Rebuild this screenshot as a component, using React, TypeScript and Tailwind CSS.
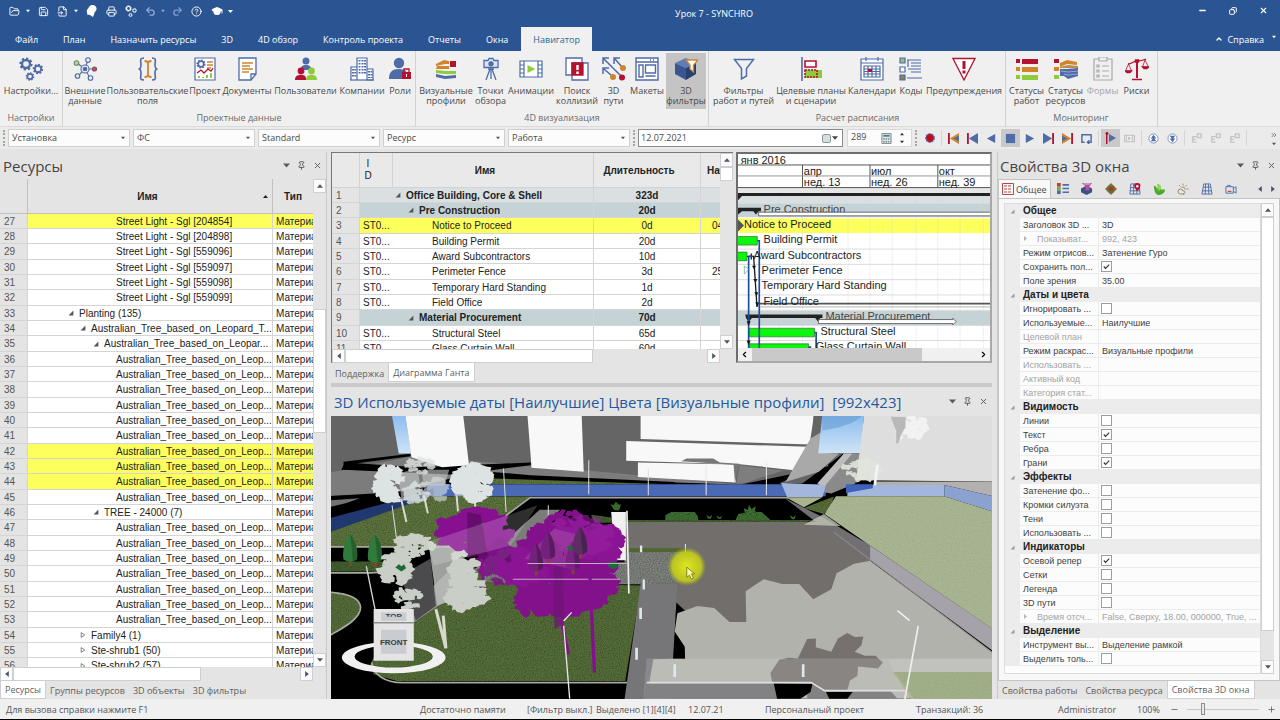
import { ReactNode } from 'react'
import { ChevronUp, CircleHelp, FolderOpen, GraduationCap, MapPin, Minus, Pin, Plus, Printer, Redo2, Save, Undo2, X, Copy, CloudSun, ChevronLeft, ChevronRight, FileInput, ChevronsRight } from 'lucide-react'

const BLUE = '#4f6ba8'
const RED = '#b5122f'
const LIME = '#8fcc3c'
const ORANGE = '#d0852c'

/* ---------- small glyphs ---------- */

const Tri = ({ dir = 'down', className = 'w-[6px] h-[6px] text-gray-600' }: { dir?: 'down' | 'up' | 'left' | 'right'; className?: string }) => {
    const d = { down: 'M0 2h10L5 8z', up: 'M0 8h10L5 2z', left: 'M8 0v10L2 5z', right: 'M2 0v10l6-5z' }[dir]
    return (
        <svg viewBox="0 0 10 10" className={className} fill="currentColor" aria-hidden="true">
            <path d={d} />
        </svg>
    )
}

const Gear = ({ x, y, r, color = BLUE }: { x: number; y: number; r: number; color?: string }) => (
    <g fill="none" stroke={color}>
        <circle cx={x} cy={y} r={r} strokeWidth={r * 0.6} />
        <circle cx={x} cy={y} r={r * 1.4} strokeWidth={r * 0.5} pathLength={16} strokeDasharray="1.1 .9" />
    </g>
)

/* ---------- ribbon icons ---------- */

const icons: Record<string, ReactNode> = {
    settings: (
        <>
            <Gear x={7} y={7} r={4} />
            <Gear x={19} y={12} r={3.200} />
            <Gear x={11} y={19.500} r={2.600} />
        </>
    ),
    external: (
        <g fill="none" stroke={BLUE} strokeWidth="1.1">
            <path d="M12 12 4 6M12 12l3-9M12 12h9M12 12l5 9M12 12l-7 7" />
            <circle cx="12" cy="12" r="4" fill="#f0f0f0" />
            <circle cx="12" cy="12" r="1.8" fill={BLUE} />
            <circle cx="3.5" cy="6" r="2.3" fill="#b9d3a0" stroke="#6d8a6a" />
            <circle cx="15" cy="3" r="2.3" fill="#f0f0f0" />
            <circle cx="21.5" cy="12" r="2" fill="#c0506a" stroke="#7e4a62" />
            <circle cx="17.5" cy="21" r="2.3" fill="#f0f0f0" />
            <circle cx="4.5" cy="19" r="2.3" fill="#dce8cc" />
        </g>
    ),
    fields: (
        <g fill="none" strokeWidth="1.6">
            <path stroke={BLUE} d="M8 1C3 1 5 4 5 8c0 2.500-1 4-2.500 4C4 12 5 13.500 5 16c0 4-2 7 3 7M16 1c5 0 3 3 3 7 0 2.500 1 4 2.500 4-1.500 0-2.500 1.500-2.500 4 0 4 2 7-3 7" />
            <path stroke={ORANGE} strokeWidth="1.8" d="M8.500 4c2 0 3.500.5 3.500 2.500v11c0 2-1.500 2.500-3.500 2.500M15.500 4c-2 0-3.500.5-3.500 2.500v11c0 2 1.500 2.500 3.500 2.500" />
        </g>
    ),
    project: (
        <g fill="none">
            <path stroke={BLUE} fill="#fff" strokeWidth="1.2" d="M2 1h20v22H2z" />
            <Gear x={8} y={7} r={2.8} />
            <path stroke={ORANGE} strokeWidth="1.4" d="M14 5h6M14 8h6M14 11h4" />
            <path stroke={RED} strokeWidth="1.3" d="m4 16 4-3 3 3 4-4 3 2 2-3" />
            <path stroke={LIME} strokeWidth="2" d="M6 21v-2M10 21v-1M14 21v-3M18 21v-5" />
        </g>
    ),
    docs: (
        <g fill="none" stroke={BLUE} strokeWidth="1.3">
            <path fill="#fff" d="M4 1h17v16l-5 6H4zM16 23v-6h5" />
            <path stroke={ORANGE} d="M7 6h11M7 9h8M7 12h11M7 15h7" />
        </g>
    ),
    users: (
        <>
            <circle cx="12" cy="4" r="3.5" fill={BLUE} />
            <path fill={BLUE} d="M6.500 13c0-3.500 2-5 5.500-5s5.500 1.500 5.500 5z" />
            <circle cx="7" cy="14" r="3.4" fill={RED} />
            <path fill={RED} d="M1 23c0-4 2-5 6-5s5 1 5 5z" />
            <circle cx="17.5" cy="14" r="3.4" fill={LIME} />
            <path fill={LIME} d="M12 23c0-4 2-5 5.500-5s5.500 1 5.500 5z" />
        </>
    ),
    companies: (
        <g fill="none" stroke={BLUE} strokeWidth="1.2">
            <path fill="#fff" d="M1 23V10h6v13M7 23V1h10v22M17 23V12h6v11z" />
            <path strokeWidth="2" strokeDasharray="1.5 1.5" d="M9.500 3v15M12.500 3v15M15 3v15M3 12v9M5.300 12v9M19 14v7M21.500 14v7" />
            <path d="M0 23h24" />
        </g>
    ),
    roles: (
        <>
            <circle cx="11" cy="6" r="5.2" fill={BLUE} />
            <path fill={BLUE} d="M1 22c0-7 3-10 10-10s9 3 9 10z" />
            <path fill={RED} d="M14 15h9v7h-9z" />
            <path fill="none" stroke={RED} strokeWidth="1.3" d="M16 15v-3h5v3" />
            <path stroke="#fff" d="M18.500 17v3" />
        </>
    ),
    profiles: (
        <>
            <path fill={ORANGE} d="m2 7 8-4 5 1v3l-4 0-9 2z" />
            <path fill={RED} d="M16 4h6v6h-6z" />
            <path fill={ORANGE} d="M3 9h12v3H2z" />
            <path fill={LIME} d="m2 13 9 1h11v3H11l-9-1z" />
            <path fill={BLUE} d="m2 17 9 2 11-1v3l-11 1-9-2z" />
        </>
    ),
    viewpoint: (
        <g fill="none" stroke={BLUE} strokeWidth="1.3">
            <path fill="#dfe5f2" d="M5 3.500h4l1-2h4l1 2h4v7H5z" />
            <circle cx="12" cy="6.8" r="2" fill={BLUE} />
            <path d="M12 10.500V22M11 12 7 23M13 12l4 11M9 12h6" />
        </g>
    ),
    animation: (
        <g fill="none" stroke={BLUE} strokeWidth="1.2">
            <path fill="#fff" d="M1 4h22v16H1z" />
            <path d="M5 4v16M19 4v16M1 8h4M1 12h4M1 16h4M19 8h4M19 12h4M19 16h4" />
            <path fill={LIME} stroke="none" d="M8.500 8v8l8-4z" />
        </g>
    ),
    clash: (
        <g fill="none" stroke={BLUE} strokeWidth="1.3">
            <path fill="#fff" d="M1 1h16v17H1z" />
            <path fill="#fff" d="M7 6h16v17H7z" />
            <path fill={RED} stroke={RED} d="M7 6h11v12H7z" />
            <path stroke="#fff" strokeWidth="2.4" d="M12.500 8v5M12.500 14.500V17" />
        </g>
    ),
    paths: (
        <>
            <path fill="none" stroke={BLUE} strokeWidth="1.5" d="m2 2 9 9M1 7V1h6M13 2l7 8M12 7V1h6M2 12l8 7M1 17v-6h6M10 10l9 9" />
            <circle cx="21" cy="11" r="3" fill={ORANGE} />
            <circle cx="11" cy="20" r="3" fill={ORANGE} />
            <circle cx="20" cy="20.5" r="3" fill={RED} />
        </>
    ),
    layouts: (
        <g fill="none" stroke={BLUE} strokeWidth="1.4">
            <path fill="#fff" d="M1 1h22v22H1z" />
            <path d="M1 5h22M4 8h4v12H4zM10.500 8h10v8h-10zM10.500 19h10M15 3h1M18 3h1" />
        </g>
    ),
    filters3d: (
        <>
            <path fill="#5f7cba" d="m12 1 10 5-10 5L1 6z" />
            <path fill="#3a5590" d="m1 6 11 5v12L1 17z" />
            <path fill="#27406f" d="m22 6-10 5v12l10-6z" />
            <path fill="#fff" stroke={ORANGE} strokeWidth="1.3" d="M12 3h12l-4.500 5v7L16 12V8z" />
        </>
    ),
    funnel: <path fill="none" stroke={BLUE} strokeWidth="1.5" d="M2.500 2.500h19l-7 9V19l-5 3V11.500z" />,
    baselines: (
        <g fill="none" strokeWidth="1.6">
            <path stroke={BLUE} d="M3 0v24" />
            <path stroke={RED} fill="#fff" d="M6 4h11v6H6z" />
            <path fill={LIME} d="M6 13h17v8H6z" />
            <path stroke={RED} strokeDasharray="2 1" d="M6 13h12v7H6z" />
        </g>
    ),
    calendar: (
        <g fill="none" stroke={BLUE} strokeWidth="1.2">
            <path fill="#fff" d="M1 2h22v21H1zM1 6h22" />
            <path d="M6 0v4M18 0v4M4 9h16v11H4zM4 12h16M4 14.500h16M4 17h16M8 9v11M12 9v11M16 9v11" />
            <path fill={RED} stroke="none" d="M8 12h4v3H8z" />
        </g>
    ),
    codes: (
        <g fill="none" stroke={BLUE} strokeWidth="1.2">
            <path fill="#9bbf6c" d="M1 1h5v5H1z" />
            <path fill="#fff" d="M1 10h5v5H1z" />
            <path fill="#8f7f52" d="M1 18h5v5H1z" />
            <path d="M8 3h14M12 6h10M12 9h10M9 3v7M9 12h13M12 15h10M8 21h15" />
        </g>
    ),
    warning: (
        <>
            <path fill="#fff" stroke={RED} strokeWidth="1.3" d="M1 1.500h22L12 23z" />
            <path stroke={RED} strokeWidth="3" d="M12 4v8M12 13.500v3" />
        </>
    ),
    taskStatus: (
        <>
            <path fill={RED} d="M1 2h4v4H1zM7 2h16v5H7z" />
            <path fill={ORANGE} d="M1 10h4v4H1zM7 10h16v5H7z" />
            <path fill={LIME} d="M1 18h4v4H1zM7 18h16v5H7z" />
        </>
    ),
    resStatus: (
        <>
            <path fill={RED} d="M0 2h5v4H0z" />
            <path fill={ORANGE} d="M0 10h5v4H0zM6 6l7-3 10 2v3l-10-1-7 3z" />
            <path fill={LIME} d="M0 18h5v4H0z" />
            <path fill="#b98c4a" d="m6 10 8-2 10 1v2H6z" />
            <path fill={BLUE} d="m6 12 7 0 11-1v8l-10 3-4-3H6z" />
            <path fill="none" stroke="#a9b8da" strokeWidth=".8" d="m7 14 7 1 10-1M10 17l4 1 10-1" />
        </>
    ),
    forms: (
        <g fill="none" stroke="#a9a9a9" strokeWidth="1.2">
            <path d="M3 2h18v21H3z" />
            <path fill="#f0f0f0" d="M8 0h8v4H8z" />
            <path d="M6 8h2v2H6zM6 13h2v2H6zM6 18h2v2H6zM11 9h7M11 14h7M11 19h7" />
        </g>
    ),
    risks: (
        <g fill="none" stroke={RED} strokeWidth="1.3">
            <path strokeWidth="2" d="M12 4v17" />
            <path d="M3 7c4 0 5-3 9-3s5 0 9-2M7 22.500h10" />
            <path strokeWidth=".8" d="m3.500 7-3 7h6zM20 3l-2.500 7h6z" />
            <path fill={RED} d="M.5 14h6L5 15.500H2zM17.500 10h6L22 11.500h-3zM10.500 3h3v2h-3z" />
        </g>
    )
}

type RibbonItem = { icon: string; label: string[]; w: string; active?: boolean; disabled?: boolean }

const ribbon: { title: string; pad: string; items: RibbonItem[] }[] = [
    { title: 'Настройки', pad: 'px-[3px]', items: [{ icon: 'settings', label: ['Настройки...'], w: 'w-[56px]' }] },
    {
        title: 'Проектные данные',
        pad: 'pl-[1px] pr-[1px]',
        items: [
            { icon: 'external', label: ['Внешние', 'данные'], w: 'w-[42px]' },
            { icon: 'fields', label: ['Пользовательские', 'поля'], w: 'w-[83px]' },
            { icon: 'project', label: ['Проект'], w: 'w-[32px]' },
            { icon: 'docs', label: ['Документы'], w: 'w-[52px]' },
            { icon: 'users', label: ['Пользователи'], w: 'w-[65px]' },
            { icon: 'companies', label: ['Компании'], w: 'w-[48px]' },
            { icon: 'roles', label: ['Роли'], w: 'w-[28px]' }
        ]
    },
    {
        title: '4D визуализация',
        pad: 'pl-[2px] pr-[2px]',
        items: [
            { icon: 'profiles', label: ['Визуальные', 'профили'], w: 'w-[56px]' },
            { icon: 'viewpoint', label: ['Точки', 'обзора'], w: 'w-[33px]' },
            { icon: 'animation', label: ['Анимации'], w: 'w-[48px]' },
            { icon: 'clash', label: ['Поиск', 'коллизий'], w: 'w-[44px]' },
            { icon: 'paths', label: ['3D', 'пути'], w: 'w-[29px]' },
            { icon: 'layouts', label: ['Макеты'], w: 'w-[38px]' },
            { icon: 'filters3d', label: ['3D', 'фильтры'], w: 'w-[40px]', active: true }
        ]
    },
    {
        title: 'Расчет расписания',
        pad: 'pl-[3px] pr-[2px]',
        items: [
            { icon: 'funnel', label: ['Фильтры', 'работ и путей'], w: 'w-[63px]' },
            { icon: 'baselines', label: ['Целевые планы', 'и сценарии'], w: 'w-[72px]' },
            { icon: 'calendar', label: ['Календари'], w: 'w-[50px]' },
            { icon: 'codes', label: ['Коды'], w: 'w-[28px]' },
            { icon: 'warning', label: ['Предупреждения'], w: 'w-[78px]' }
        ]
    },
    {
        title: 'Мониторинг',
        pad: 'pl-[2px] pr-[3px]',
        items: [
            { icon: 'taskStatus', label: ['Статусы', 'работ'], w: 'w-[37px]' },
            { icon: 'resStatus', label: ['Статусы', 'ресурсов'], w: 'w-[41px]' },
            { icon: 'forms', label: ['Формы'], w: 'w-[33px]', disabled: true },
            { icon: 'risks', label: ['Риски'], w: 'w-[35px]' }
        ]
    }
]

/* ---------- title bar and ribbon ---------- */

const quickIcon = 'w-[11px] h-[11px] text-white'

const TitleBar = () => (
    <div className="flex h-[27px] items-center">
        <div className="flex w-[238px] shrink-0 items-center pl-[9px] pb-[6px] gap-[5px] pt-[1px]">
            <button aria-label="Открыть" className="flex items-center gap-[6px]">
                <FolderOpen className={quickIcon} />
                <Tri className="w-1 h-1 text-white" />
            </button>
            <button aria-label="Сохранить" className="ml-[3px]">
                <Save className={quickIcon} />
            </button>
            <button aria-label="Импорт" className="ml-[3px] flex items-center gap-[6px]">
                <FileInput className={quickIcon} />
                <Tri className="w-1 h-1 text-white" />
            </button>
            <button aria-label="Знание" className="ml-[3px]">
                <svg viewBox="0 0 12 12" className="h-3 w-3" fill="#fff">
                    <path d="M6 0c3 0 5 2 4.500 4.500-.5 2-2 2-2 3.500L7 12 4 10 1 9.500C2 8 0 7 1 5s1-1 1.500-2S4 0 6 0z" />
                </svg>
            </button>
            <button aria-label="Печать" className="ml-[3px]">
                <Printer className={quickIcon} />
            </button>
            <button aria-label="Параметры" className="ml-[3px]">
                <svg viewBox="0 0 24 24" className="h-3 w-3">
                    <Gear x={7} y={7} r={4} color="#fff" />
                    <Gear x={19} y={11} r={3} color="#fff" />
                    <Gear x={11} y={20} r={2.5} color="#fff" />
                </svg>
            </button>
            <button aria-label="Отменить" className="ml-[3px] flex items-center gap-[5px]">
                <Undo2 className="w-[11px] h-[11px] text-[#8fa6cf]" strokeWidth={3} />
                <Tri className="w-1 h-1 text-[#8fa6cf]" />
            </button>
            <button aria-label="Вернуть" className="ml-[2px]">
                <Redo2 className="w-[11px] h-[11px] text-[#7f98c6]" strokeWidth={3} />
            </button>
            <button aria-label="Помощь" className="ml-[3px]">
                <CircleHelp className={quickIcon} />
            </button>
            <button aria-label="Обучение" className="ml-[4px] flex items-center gap-[5px]">
                <GraduationCap className="w-[12px] h-[12px] fill-white text-white" strokeWidth={2} />
                <Tri className="w-[5px] h-[5px] text-white" />
            </button>
        </div>
        <h1 className="flex-1 text-center text-white">Урок 7 - SYNCHRO</h1>
        <div className="flex w-[90px] shrink-0 items-center gap-[22px] pl-2 pb-[6px] text-white">
            <button aria-label="Свернуть"><Minus className="w-[9px] h-[9px]" strokeWidth={4} /></button>
            <button aria-label="Восстановить"><Copy className="w-[8px] h-[8px] -scale-x-100" strokeWidth={3} /></button>
            <button aria-label="Закрыть"><X className="w-[9px] h-[9px]" strokeWidth={3} /></button>
        </div>
    </div>
)

const menu = ['Файл', 'План', 'Назначить ресурсы', '3D', '4D обзор', 'Контроль проекта', 'Отчеты', 'Окна', 'Навигатор']

const MenuBar = () => (
    <nav className="flex h-[24px] items-stretch gap-px pl-[3px] text-white">
        {menu.map(m => (
            <button key={m} className={m === 'Навигатор' ? 'bg-[#f0f0f0] px-3 text-[#1f6b8f]' : 'px-3'}>{m}</button>
        ))}
        <button className="ml-auto flex items-center gap-1 pr-1">
            <ChevronUp className="w-[8px] h-[8px]" strokeWidth={4} />
            Справка
            <Tri className="ml-1 mb-1 w-1 h-1 text-white" />
        </button>
    </nav>
)

const Ribbon = () => (
    <div className="flex h-[75px] shrink-0 bg-[#f0f0f0] text-[#4a4a4a]">
        {ribbon.map(g => (
            <section key={g.title} className={`flex shrink-0 flex-col border-r border-[#d2d2d2] pt-[2px] ${g.pad}`}>
                <div className="flex h-[56px]">
                    {g.items.map(it => (
                        <button
                            key={it.icon}
                            disabled={it.disabled}
                            className={`flex shrink-0 flex-col items-center overflow-visible whitespace-nowrap pt-1 leading-[10px] ${it.w} ${it.active ? 'bg-[#c4c4c4]' : ''} ${it.disabled ? 'text-[#a6a6a6]' : ''}`}
                        >
                            <svg viewBox="0 0 24 24" className="mb-[5px] h-6 w-6 shrink-0">{icons[it.icon]}</svg>
                            {it.label.map(l => <span key={l} className="flex w-0 justify-center">{l}</span>)}
                        </button>
                    ))}
                </div>
                <h2 className="mt-[2px] text-center text-[#6b6b6b]">{g.title}</h2>
            </section>
        ))}
    </div>
)

/* ---------- toolbar ---------- */

const Grip = () => <div className="mx-[3px] h-4 w-0 border-l-2 border-dotted border-[#a5a5a5]" />

const Divider = () => <div className="mx-[2px] h-4 w-px bg-[#d6d6d6]" />

const Combo = ({ label, value }: { label: string; value: string }) => (
    <label className="relative flex h-[18px] w-[122px] items-center border border-[#d0d0d0] bg-[#fcfcfc]">
        <span className="sr-only">{label}</span>
        <select className="h-full w-full appearance-none bg-transparent pl-[3px] leading-4 outline-none">
            <option>{value}</option>
        </select>
        <span className="pointer-events-none absolute right-1"><Tri className="h-1 w-1 text-gray-600" /></span>
    </label>
)

const tb = 'flex h-[18px] w-[19px] items-center justify-center'

const player: { name: string; on?: boolean; art: ReactNode }[] = [
    { name: 'В начало', art: <><path fill={RED} d="M0 0h2v12H0z" /><path fill={ORANGE} d="M12 0v12L2 6z" /><path fill={BLUE} d="M12 3v6L6 6z" /></> },
    { name: 'Предыдущий', art: <><path fill={RED} d="M0 0h2v12H0z" /><path fill={BLUE} d="M12 0v12L2 6z" /></> },
    { name: 'Назад', art: <path fill={BLUE} d="M10 1v10L1 6z" /> },
    { name: 'Стоп', on: true, art: <path fill={BLUE} d="M1 1h10v10H1z" /> },
    { name: 'Воспроизвести', art: <path fill={BLUE} d="M2 1v10l9-5z" /> },
    { name: 'Следующий', art: <><path fill={RED} d="M10 0h2v12h-2z" /><path fill={BLUE} d="M0 0v12l10-6z" /></> },
    { name: 'В конец', art: <><path fill={RED} d="M10 0h2v12h-2z" /><path fill={ORANGE} d="M0 0v12l10-6z" /><path fill={BLUE} d="M0 3v6l6-3z" /></> },
    { name: 'Цикл', art: <path fill="none" stroke={BLUE} strokeWidth="1.6" d="M4 10H1V2h10v8H7.500M9 8l-2 2 2 2" /> }
]

const Toolbar = () => (
    <div className="flex h-[23px] shrink-0 items-center border-t border-[#dadada] bg-[#ebebeb] pl-[3px] text-[#4a4a4a]">
        <div className="mr-[3px] h-4 w-0 border-l-2 border-dotted border-[#a5a5a5]" />
        <div className="flex gap-[3px]">
            <Combo label="Тип" value="Установка" />
            <Combo label="Роль" value="ФС" />
            <Combo label="Вид" value="Standard" />
            <Combo label="Объект" value="Ресурс" />
            <Combo label="Цель" value="Работа" />
        </div>
        <Grip />
        <label className="flex h-[18px] w-[205px] items-center border border-[#8a8a8a] bg-white pr-1">
            <span className="sr-only">Дата</span>
            <input className="min-w-0 flex-1 pl-[2px] leading-4 outline-none" defaultValue="12.07.2021" />
            <span className="mr-px h-[9px] w-[9px] rounded-[2px] border border-[#8a9a9a] bg-[#d8dede]" />
            <Tri className="h-[6px] w-[6px] text-[#444]" />
        </label>
        <label className="ml-1 flex h-[18px] w-[65px] items-center border border-[#d8d8d8] bg-[#fcfcfc]">
            <span className="sr-only">День</span>
            <input className="min-w-0 flex-1 pl-[3px] pb-[2px] leading-4 outline-none" defaultValue="289" />
            <svg viewBox="0 0 12 12" className="h-[11px] w-[11px]">
                <path fill="#d9e6e0" stroke="#7b8790" d="M1 .5h10v11H1z" />
                <path fill="#4d7f86" d="M2.500 2h7v2h-7z" />
                <path stroke="#7b8790" strokeWidth="1.5" strokeDasharray="1.5 1" d="M2.500 6.500h8M2.500 9.500h8" />
            </svg>
            <span className="flex w-[19px] flex-col items-center gap-[4px]">
                <Tri dir="up" className="h-1 w-1 text-[#333]" />
                <Tri className="h-1 w-1 text-[#333]" />
            </span>
        </label>
        <Grip />
        <button aria-label="Запись" className={tb}>
            <svg viewBox="0 0 12 12" className="h-[10px] w-[10px]"><circle cx="6" cy="6" r="5" fill="#c00a1e" stroke={BLUE} strokeWidth="1.6" strokeDasharray="2.5 1" /></svg>
        </button>
        <Divider />
        {player.map(p => (
            <button key={p.name} aria-label={p.name} className={p.on ? `${tb} bg-[#c9c9c9]` : tb}>
                <svg viewBox="0 0 12 12" className="h-[11px] w-[11px]">{p.art}</svg>
            </button>
        ))}
        <Divider />
        <button aria-label="Фокус" className={`${tb} bg-[#c9c9c9]`}>
            <svg viewBox="0 0 12 12" className="h-3 w-3"><path fill={RED} d="M1 0h1.500v12H1z" /><path fill={BLUE} d="M4 2v8l7-4z" /><circle cx="2" cy="1.5" r="1.5" fill={RED} /></svg>
        </button>
        <button aria-label="Клип" className={tb}>
            <svg viewBox="0 0 12 12" className="h-[11px] w-[11px]"><path fill="none" stroke="#bdbdbd" d="M.5 2.500h11v7H.5zM2.500 2.500v7M9.500 2.500v7" /><path fill="#bdbdbd" d="M4.500 4v4l3-2z" /></svg>
        </button>
        <Divider />
        {['вверх', 'вниз'].map((n, i) => (
            <button key={n} aria-label={n} className={tb}>
                <svg viewBox="0 0 12 12" className={i ? 'h-[11px] w-[11px] rotate-180' : 'h-[11px] w-[11px]'}>
                    <circle cx="6" cy="6" r="5" fill="#fff" stroke="#7d91bd" />
                    <path fill={BLUE} d="M6 2 3 6h6zM6 5 3 9h6z" />
                </svg>
            </button>
        ))}
        <Divider />
        {['Связь 1', 'Связь 2', 'Связь 3'].map(n => (
            <button key={n} aria-label={n} disabled className={tb}>
                <svg viewBox="0 0 12 12" className="h-[11px] w-[11px]" fill="none" stroke="#c4c4c4" strokeWidth="1.5"><path d="M6 4H2v6h4M2 7h3M7 1h4v4H7z" /></svg>
            </button>
        ))}
        <Divider />
        <button aria-label="Ещё" className="ml-auto flex flex-col items-center gap-[3px] pr-[2px]">
            <ChevronsRight className="h-2 w-2" />
            <Tri className="h-1 w-1 text-gray-600" />
        </button>
    </div>
)

/* ---------- shared panel parts ---------- */

const PanelButtons = () => (
    <div className="flex items-center gap-[7px] text-[#5a5a5a]">
        <button aria-label="Меню панели"><Tri className="h-[7px] w-[7px]" /></button>
        <button aria-label="Закрепить"><Pin className="h-[9px] w-[9px]" strokeWidth={2.5} /></button>
        <button aria-label="Закрыть панель"><X className="h-[9px] w-[9px]" strokeWidth={2.5} /></button>
    </div>
)

const sbBtn = 'flex h-[14px] w-[13px] shrink-0 items-center justify-center border border-[#cfcfcf] bg-[#fbfbfb]'

const VScroll = ({ before, thumb, after }: { before: string; thumb: string; after: string }) => (
    <div className="flex w-[13px] shrink-0 flex-col bg-[#e4e4e4]">
        <button aria-label="Вверх" className={sbBtn}><Tri dir="up" /></button>
        <div className={before} />
        <div className={`border border-[#cfcfcf] bg-white ${thumb}`} />
        <div className={after} />
        <button aria-label="Вниз" className={sbBtn}><Tri /></button>
    </div>
)

const HScroll = ({ thumb, end }: { thumb: string; end: string }) => (
    <div className={`flex h-[14px] shrink-0 bg-[#e4e4e4] ${end}`}>
        <button aria-label="Влево" className={sbBtn}><Tri dir="left" /></button>
        <div className={`border border-[#cfcfcf] bg-white ${thumb}`} />
        <div className="flex-1" />
        <button aria-label="Вправо" className={sbBtn}><Tri dir="right" /></button>
    </div>
)

const Tabs = ({ items, active }: { items: string[]; active: string }) => (
    <div className="flex h-[18px] shrink-0 items-stretch text-[#5f5f5f]">
        {items.map(t => (
            <button key={t} className={t === active ? 'border border-t-0 border-[#cfcfcf] bg-white px-1' : 'px-1'}>{t}</button>
        ))}
    </div>
)

const Expander = ({ open }: { open: boolean }) => (
    <svg viewBox="0 0 10 10" className="mr-[5px] h-[6px] w-[6px] shrink-0">
        {open ? <path fill="#555" d="M9 1v8H1z" /> : <path fill="none" stroke="#777" strokeWidth="1.5" d="M2 1v8l6-4z" />}
    </svg>
)

const rowHeight = (i: number) => (i % 3 === 2 ? 'h-4' : 'h-[15px]')

/* ---------- resources ---------- */

type ResourceRow = { n: number; name: string; indent: string; open?: boolean; hit?: boolean }

const LEAF = 'pl-[88px]'
const tree = (n: number, hit = false): ResourceRow => ({ n, name: 'Australian_Tree_based_on_Leop...', indent: LEAF, hit })

const resources: ResourceRow[] = [
    { n: 27, name: 'Street Light - Sgl [204854]', indent: LEAF, hit: true },
    { n: 28, name: 'Street Light - Sgl [204898]', indent: LEAF },
    { n: 29, name: 'Street Light - Sgl [559096]', indent: LEAF },
    { n: 30, name: 'Street Light - Sgl [559097]', indent: LEAF },
    { n: 31, name: 'Street Light - Sgl [559098]', indent: LEAF },
    { n: 32, name: 'Street Light - Sgl [559099]', indent: LEAF },
    { n: 33, name: 'Planting (135)', indent: 'pl-[40px]', open: true },
    { n: 34, name: 'Australian_Tree_based_on_Leopard_T...', indent: 'pl-[52px]', open: true },
    { n: 35, name: 'Australian_Tree_based_on_Leopar...', indent: 'pl-[65px]', open: true },
    ...[36, 37, 38, 39, 40, 41].map(n => tree(n)),
    ...[42, 43, 44].map(n => tree(n, true)),
    tree(45),
    { n: 46, name: 'TREE - 24000 (7)', indent: 'pl-[65px]', open: true },
    ...[47, 48, 49, 50, 51, 52, 53].map(n => tree(n)),
    { n: 54, name: 'Family4 (1)', indent: 'pl-[52px]', open: false },
    { n: 55, name: 'Ste-shrub1 (50)', indent: 'pl-[52px]', open: false },
    { n: 56, name: 'Ste-shrub2 (57)', indent: 'pl-[52px]', open: false }
]

const ResourcesPanel = () => (
    <aside className="flex w-[327px] shrink-0 flex-col border-r border-[#c8c8c8]">
        <header className="flex h-[27px] shrink-0 items-center justify-between pl-[3px] pr-1">
            <h2 className="text-[15px] leading-5 text-[#444]">Ресурсы</h2>
            <PanelButtons />
        </header>
        <div className="flex min-h-0 flex-1">
            <div className="min-w-0 flex-1 overflow-hidden bg-white">
                <table className="w-full table-fixed border-separate border-spacing-0 font-['Liberation_Sans',sans-serif] text-[10px] leading-[13px] text-[#222]">
                    <thead>
                        <tr className="bg-[#e4e4e4]">
                            <th className="h-[35px] w-[28px] border-b border-r border-[#c0c0c0]" />
                            <th className="border-b border-r border-[#c0c0c0]">
                                <span className="flex items-center"><span className="flex-1 pl-1">Имя</span><Tri dir="up" className="mr-1 h-[5px] w-[5px]" /></span>
                            </th>
                            <th className="w-[40px] border-b border-[#c0c0c0]">Тип</th>
                        </tr>
                    </thead>
                    <tbody>
                        {resources.map((r, i) => (
                            <tr key={r.n} className={r.hit ? 'bg-[#fdff5c]' : 'bg-white'}>
                                <td className={`border-b border-r border-[#d5d5d5] bg-[#e4e4e4] pl-1 text-[#555] ${rowHeight(i)}`}>{r.n}</td>
                                <td className="overflow-hidden border-b border-r border-[#d5d5d5]">
                                    <span className={`flex items-center whitespace-nowrap ${r.indent}`}>
                                        {r.open !== undefined && <Expander open={r.open} />}
                                        {r.name}
                                    </span>
                                </td>
                                <td className="overflow-hidden whitespace-nowrap border-b border-[#d5d5d5] pl-[3px]">Материал</td>
                            </tr>
                        ))}
                    </tbody>
                </table>
            </div>
            <VScroll before="h-[116px]" thumb="h-[124px]" after="flex-1" />
        </div>
        <HScroll thumb="w-[188px]" end="pr-[13px]" />
        <Tabs items={['Ресурсы', 'Группы ресурсов', '3D объекты', '3D фильтры']} active="Ресурсы" />
    </aside>
)

/* ---------- gantt ---------- */

const tasks = [
    { n: 1, id: '', name: 'Office Building, Core & Shell', dur: '323d', start: '', level: 0 },
    { n: 2, id: '', name: 'Pre Construction', dur: '20d', start: '', level: 1 },
    { n: 3, id: 'ST0...', name: 'Notice to Proceed', dur: '0d', start: '04.01', level: 2 },
    { n: 4, id: 'ST0...', name: 'Building Permit', dur: '20d', start: '', level: 2 },
    { n: 5, id: 'ST0...', name: 'Award Subcontractors', dur: '10d', start: '', level: 2 },
    { n: 6, id: 'ST0...', name: 'Perimeter Fence', dur: '3d', start: '25.01', level: 2 },
    { n: 7, id: 'ST0...', name: 'Temporary Hard Standing', dur: '1d', start: '', level: 2 },
    { n: 8, id: 'ST0...', name: 'Field Office', dur: '2d', start: '', level: 2 },
    { n: 9, id: '', name: 'Material Procurement', dur: '70d', start: '', level: 1 },
    { n: 10, id: 'ST0...', name: 'Structural Steel', dur: '65d', start: '', level: 2 },
    { n: 11, id: 'ST0...', name: 'Glass Curtain Wall', dur: '60d', start: '', level: 2 }
]

const rowColor = (t: (typeof tasks)[number]) => {
    if (t.n === 3) return 'bg-[#fdff5c]'
    return ['bg-[#dadfe2] font-bold', 'bg-[#c6d3d6] font-bold', 'bg-white'][t.level]
}

const TaskTable = () => (
    <div className="flex min-w-0 flex-1 flex-col border-l border-t border-[#777] bg-[#e4e4e4]">
        <div className="flex min-h-0 flex-1">
            <div className="min-w-0 flex-1 overflow-hidden bg-white">
                <table className="w-full table-fixed border-separate border-spacing-0 font-['Liberation_Sans',sans-serif] text-[10px] leading-[13px] text-[#222]">
                    <thead>
                        <tr className="bg-[#e9e9e9]">
                            <th className="h-[35px] w-[28px] border-b border-r border-[#d2d2d2]" />
                            <th className="w-[33px] border-b border-r border-[#d2d2d2] font-normal leading-3"><span className="flex flex-col pr-4"><span>I</span><span>D</span></span></th>
                            <th className="border-b border-r border-[#d2d2d2] pr-4">Имя</th>
                            <th className="w-[107px] border-b border-r border-[#d2d2d2] pr-4">Длительность</th>
                            <th className="w-[19px] overflow-hidden whitespace-nowrap border-b border-[#d2d2d2] pl-[6px] text-left">Начало</th>
                        </tr>
                    </thead>
                    <tbody>
                        {tasks.map((t, i) => (
                            <tr key={t.n} className={rowColor(t)}>
                                <td className={`border-b border-r border-[#d5d5d5] bg-[#e4e4e4] pl-1 font-normal text-[#555] ${rowHeight(i)}`}>{t.n}</td>
                                <td className="overflow-hidden whitespace-nowrap border-b border-[#d5d5d5] pl-[3px]">{t.id}</td>
                                <td className="overflow-hidden border-b border-r border-[#d5d5d5]">
                                    <span className={`flex items-center whitespace-nowrap ${['pl-[2px]', 'pl-[15px]', 'pl-[39px]'][t.level]}`}>
                                        {t.level < 2 && <Expander open />}
                                        {t.name}
                                    </span>
                                </td>
                                <td className="border-b border-r border-[#d5d5d5] text-center">{t.dur}</td>
                                <td className="overflow-hidden whitespace-nowrap border-b border-[#d5d5d5] pl-[11px]">{t.start}</td>
                            </tr>
                        ))}
                    </tbody>
                </table>
            </div>
            <VScroll before="h-0" thumb="h-[14px]" after="flex-1" />
        </div>
        <HScroll thumb="w-[248px]" end="pr-[13px]" />
    </div>
)

const GanttChart = () => (
    <div className="ml-[3px] flex w-[256px] shrink-0 flex-col border-2 border-[#a8a8a8] border-l-[#6e6e6e] border-t-[#6e6e6e] bg-white">
        <svg viewBox="24 9 758 585" preserveAspectRatio="xMinYMin slice" className="min-h-0 w-full flex-1 font-['Liberation_Sans',sans-serif] text-[33px]" fill="#1c1c1c">
            <path fill="#fff" d="M24 9h758v600H24z" />
            <path fill="#e6e6e6" d="M24 110h758v18H24z" />
            <path fill="#dadfe2" d="M24 128h758v29H24z" />
            <path fill="#c6d3d6" d="M24 157h758v42H24zM24 480h758v45H24z" />
            <path fill="#fdff5c" d="M24 203h758v44H24z" />
            <path stroke="#dcdcdc" strokeWidth="3" d="M24 295h758M24 341h758M24 387h758M24 433h758M24 479h758M24 570h758M24 525h758" />
            <path stroke="#cfcfcf" strokeWidth="2" strokeDasharray="6 3" opacity=".7" d="M148 128v470M218 128v470M355 128v470M421 128v470M488 128v470M560 128v470M625 128v470M692 128v470M762 128v470" />
            <path stroke="#555" strokeWidth="3" d="M24 42h758M218 42v68M421 42v68M625 42v68M24 110h758" />
            <path stroke="#999" strokeWidth="3" d="M24 75h758" />
            <text x="32" y="38">янв 2016</text>
            <text x="222" y="71">апр</text>
            <text x="424" y="71">июл</text>
            <text x="628" y="71">окт</text>
            <text x="222" y="104">нед. 13</text>
            <text x="424" y="104">нед. 26</text>
            <text x="628" y="104">нед. 39</text>

            <path fill="#222" d="M24 126h758v9H36L24 148zM24 171h69v10H86l-8 10-8-10H36l-12 10zM46 492h232v10h-6l-8 10-8-10H66l-10 12-8-12z" />
            <g fill="#444"><text x="101" y="186">Pre Construction</text><text x="287" y="507">Material Procurement</text></g>
            <path fill="#fff" stroke="#333" strokeWidth="2" d="M86 184h700v11H86zM266 507h404v-4l10 10-10 10v-4H266z" />
            <path fill="#555" d="m24 206 18 18-18 18z" />
            <g stroke="#2a6a2a" strokeWidth="2" fill="#0cf50c">
                <path d="M20 257h62v26H20zM20 304h31v26H20zM58 533h196v26H58zM58 580h178v26H58z" />
            </g>
            <path fill="none" stroke="#555" strokeWidth="5" d="M88 459h694" />
            <path fill="none" stroke="#8a8a8a" strokeWidth="2" d="M88 469h694" />
            <path fill="none" stroke="#1a1a1a" strokeWidth="4" d="M51 317h20l2 30 4 60 4 62M64 308v18" />
            <path fill="#1a1a1a" d="m66 345 12 0-5 12zM70 385h12l-5 12zM73 425h12l-5 12zM76 455h12l-5 14z" />
            <path fill="none" stroke="#1c4c9c" strokeWidth="5" d="M56 317v281M82 270h6v328M56 317h12M254 546h5v52M236 590h8" />
            <path fill="#1a1a1a" d="M50 512h12l-6 14zM50 570h12l-6 14z" />
            <path fill="none" stroke="#4fa08c" strokeWidth="2" d="m43 346 14 10-14 14z" />
            <text x="42" y="231">Notice to Proceed</text>
            <text x="101" y="278">Building Permit</text>
            <text x="71" y="324">Award Subcontractors</text>
            <text x="95" y="370">Perimeter Fence</text>
            <text x="95" y="416">Temporary Hard Standing</text>
            <text x="101" y="462">Field Office</text>
            <text x="272" y="554">Structural Steel</text>
            <text x="258" y="599">Glass Curtain Wall</text>
        </svg>
        <div className="flex h-[13px] shrink-0 items-center bg-[#f0f0f0] px-[2px]">
            <ChevronLeft className="h-[9px] w-[9px]" strokeWidth={3} />
            <div className="ml-[3px] h-full w-[170px] bg-[#c9c9c9]" />
            <ChevronRight className="ml-auto h-[9px] w-[9px]" strokeWidth={3} />
        </div>
    </div>
)

/* ---------- 3D scene ---------- */

// Foliage as many small leaf clumps scattered over an ellipse, repeatable for a given seed
const foliage = (cx: number, cy: number, rx: number, ry: number, seed: number, clumps = 50) => {
    let s = seed * 7919
    const rnd = () => {
        s = (s * 16807) % 2147483647
        return s / 2147483647
    }
    const size = Math.min(rx, ry, 90) * 0.24
    let d = ''
    for (let i = 0; i < clumps; i++) {
        const a = rnd() * Math.PI * 2
        const k = Math.sqrt(rnd()) * 0.88
        const x = cx + Math.cos(a) * rx * k
        const y = cy + Math.sin(a) * ry * k
        const pts: string[] = []
        for (let j = 0; j < 9; j++) {
            const b = (j / 9) * Math.PI * 2
            const r = size * (0.55 + rnd() * 0.8)
            pts.push(`${Math.round(x + Math.cos(b) * r * 1.4)} ${Math.round(y + Math.sin(b) * r)}`)
        }
        d += `M${pts.join('L')}Z`
    }
    return d
}

const Conifer = ({ x, y, fill }: { x: number; y: number; fill: string }) => (
    <g>
        <path fill="#7a4a2a" d={`M${x - 3} ${y + 78}h8v18h-8z`} />
        <path fill={fill} d={`M${x} ${y}C${x + 14} ${y + 12} ${x + 26} ${y + 54} ${x + 20} ${y + 76}Q${x} ${y + 90} ${x - 20} ${y + 76}C${x - 26} ${y + 54} ${x - 14} ${y + 12} ${x} ${y}Z`} />
        <path fill="#000" opacity=".22" d={`M${x} ${y}C${x + 14} ${y + 12} ${x + 26} ${y + 54} ${x + 20} ${y + 76}L${x + 8} ${y + 82}Z`} />
    </g>
)

const Scene = () => (
    <svg viewBox="9 93 1983 846" preserveAspectRatio="xMidYMid slice" className="min-h-0 w-full flex-1" role="img" aria-label="3D вид">
        <defs>
            <filter id="grain" x="0" y="0" width="100%" height="100%">
                <feTurbulence type="fractalNoise" baseFrequency=".3" numOctaves="2" seed="4" />
                <feColorMatrix values="0 0 0 0 0  0 0 0 0 0  0 0 0 0 0  1.1 0 0 0 -.4" />
                <feComposite operator="in" in2="SourceGraphic" result="n" />
                <feMerge><feMergeNode in="SourceGraphic" /><feMergeNode in="n" /></feMerge>
            </filter>
            <filter id="softGrain" x="0" y="0" width="100%" height="100%">
                <feTurbulence type="fractalNoise" baseFrequency=".3" numOctaves="2" seed="9" />
                <feColorMatrix values="0 0 0 0 .2  0 0 0 0 .3  0 0 0 0 .1  .7 0 0 0 -.25" />
                <feComposite operator="in" in2="SourceGraphic" result="n" />
                <feMerge><feMergeNode in="SourceGraphic" /><feMergeNode in="n" /></feMerge>
            </filter>
            <radialGradient id="glow">
                <stop offset="0" stopColor="#e0e81a" />
                <stop offset=".75" stopColor="#c2cc1c" stopOpacity=".9" />
                <stop offset="1" stopColor="#a8b020" stopOpacity="0" />
            </radialGradient>
            <linearGradient id="sky" x2="0" y2="1">
                <stop offset="0" stopColor="#8dbdf0" />
                <stop offset="1" stopColor="#cfe4f5" />
            </linearGradient>
        </defs>
        <path fill="#000" d="M9 93h1983v846H9z" />
        {/* buildings */}
        <path fill="#656565" d="M9 93h1490v150l-260 55-240-10L50 240 9 330z" />
        <path fill="#7c7c7c" d="M9 262 250 215l360 25 620 58-600-20L440 262 180 328 9 332z" />
        <path fill="#646464" d="M9 93h190l15 112L50 228 9 250z" />
        <path fill="#000" d="m50 230 200-24v7L90 234l180 12 340-14v8l-140 18 140 12 430 20v9l-560-26L50 254zM9 332l180-10-60 25L9 382z" />
        <path fill="#727272" d="m9 345 90-6-40 14-50 12z" />
        <path fill="url(#sky)" d="M195 93h40l17 112h-37z" />
        <g fill="#f8f8f8">
            <path d="M235 93h173l17 147-80 6-92-30z" />
            <path d="M600 93h162l6 167-156-12z" />
            <path d="M938 93h517l-5 85-512-16zM895 168l540 17-4 74-196-22-340-10zM930 232l292 6v54l-292-17z" />
        </g>
        <path fill="#777" d="m1060 228 15-8h80l20 12 58 4-13 55-4-52z" />
        <path fill="#7e7e7e" d="m1234 240 130 16-110 36-30 4z" />
        {/* water strip */}
        <path fill="#4a6ab6" d="M300 297h1200l-10 36H300z" />
        <path fill="#20386f" d="m9 398 180-48 130-40v32L9 440z" />
        {/* lawns */}
        <g filter="url(#grain)">
            <path fill="#5f7440" d="m9 440 300-106h300l-60 50-130 98H9zM500 280l500 16H480z" />
            <path fill="#576e3a" d="m200 700 220-170 80 60 440 10-48 285H210l-70-20-10-30z" />
            <path fill="#576e3a" d="M9 622c60 4 90 18 92 45 0 34-50 60-92 82z" />
            <path fill="#446030" d="M9 528h180v30H9zM790 390l30-12 60 26h570l-20 8H800z" />
            <path fill="#7f827d" d="M470 530h590l-20 66H560l-90-10z" />
        </g>
        <path fill="none" stroke="#a9a9a0" strokeWidth="5" d="M9 484h430M9 562h120l110-6M9 620c60 4 90 18 92 45 0 34-50 60-92 84M135 830c0 35 40 60 90 60h760" />
        <path fill="#000" d="m620 338 240 0 0 60-180-26-68 0-150 130-40-20z" />
        <path fill="none" stroke="#a5a5a5" strokeWidth="5" d="m420 476 188-139h772" />
        <path fill="#7b7b79" d="M636 373h62L570 492l-80 60-60 10z" />
        {/* road */}
        <path fill="#726e6b" d="M870 410h606l150 68v48L1400 800l-130 60-400-372z" />
        <path fill="#50652f" d="M900 488h176v12H900z" />
        <path fill="#7f827d" d="M890 500h180v90H890z" filter="url(#grain)" />
        <path fill="#767678" d="M938 595h110l-20 345H890z" />
        {/* planting bed */}
        <g fill="#3f6f35" filter="url(#grain)">
            <path d="m1012 404 0-14 18-10h70l10 14v10zM1222 404l8-18 30-6h40l26 24z" />
            <path d="m1250 382-4-14 12 6 4-16 8 14 12-10-2 16 8 4zM860 375l-12-18 10 2 6-10 10 10 6-4-6 20zM1140 400l-6-12 10 6 8-6-4 12zM1170 400l-6-10 10 6 8-4-4 8zM1390 402l-6-12 10 6 8-6-4 12z" />
        </g>
        {/* right hand side */}
        <g transform="translate(996 0)">
            <path fill="#656565" d="M460 93h25l-10 110 70 4-120 88h-70l80-35z" />
            <path fill="#a9a9a9" d="m450 160 40-24-15 68 60 2-60 54-100 30z" />
            <path fill="url(#sky)" d="M485 93h125l-10 112H473z" />
            <path fill="#5c93ce" opacity=".5" d="M485 93h120l-30 20-40 14-50 10z" />
            <path fill="#8a8a8a" d="m550 205 48 0-14 90-72 30-40-8z" />
            <path fill="#bdbdbd" d="m550 205 25 0-85 100-20-10z" />
            <path fill="#dedede" d="M610 93h386v196l-410-4z" />
            <path fill="#b3b0ae" d="M640 289h356v44l-146-34H640z" />
            <path fill="#a3b6dc" d="m362 293 134 6-10 36H380zM560 299h290v34H560z" />
            <path fill="#3f63b8" d="M556 297h80v12l-80 14z" />
            <path fill="#8ba2d0" d="m850 299 146 34v46l-146-46z" />
            <path fill="#a9b38f" d="m376 336 110 0-56 30z" />
            <path fill="#5a703a" d="m430 368 90-34-10 30-20 22z" filter="url(#grain)" />
            <path fill="#aab695" d="M526 333h324l146 46v352L628 480l-136-94z" filter="url(#softGrain)" />
            <path fill="#716f72" d="m372 338 112 56 144 86v46L480 420z" />
            <path fill="#a5a3a9" d="m628 480 368 250v66L628 524z" />
            <path fill="#c0c4b6" d="m430 418 60-32 50 36z" opacity=".8" />
            <path fill="#b0b2ab" d="m628 526 368 274v138H-40l20-118 64-1 31 0-1-36-30-46 8-54 60-22 50 6 46 42 50 0-2-92 54-36 56 14h50l42 46 54-30 16-48 52-28z" />
            <path fill="#b7b8b3" d="m680 820 316 0v38H700z" />
            <path fill="#a3b08c" d="M696 858h300v81H750z" filter="url(#softGrain)" />
            <path fill="#76716e" d="m440 760 26-2 0 26 46 14 20-40 28-16 22 12 26-2-6 26-20 20 30 12h32l22 20-14 18-60-6-2 28-22 14-8 28 40 0H340l-10-50 26-40 30-6 26 2z" />
            <path fill="#fff" opacity=".14" d="M-40 818H1000v40H700l60 81H-50z" />
            <path fill="#828285" d="M-40 892h380l12 46H-50zM440 892h20l30 24h200l20 22H440z" />
            <path fill="#000" d="m340 892 116 2-6 24-30 20h-70zM496 918h80l-16 20h-54z" />
            <path fill="none" stroke="#ddd" strokeWidth="5" d="M-40 890h492l40 24h240" />
            <path fill="none" stroke="#eee" strokeWidth="5" d="m710 675 36 30M772 720l-40 219" />
            <path fill="none" stroke="#8d8e89" strokeWidth="3" d="m520 440 476 362" />
            <path fill="#f2f2f2" d={foliage(750, 128, 54, 40, 77, 30)} />
            <path fill="#b9b9b9" d="m690 95 44 2 0 28-14 26-8 24-6 0 0-36z" />
            <path fill="#dfe6dd" d={foliage(605, 255, 66, 34, 31, 40)} opacity=".9" />
            <path stroke="#f4f4f4" strokeWidth="8" d="m650 240-8 60" />
            <path stroke="#e8e8e8" strokeWidth="3" d="M138 240v90M318 228v102M76 476v24" />
            <path fill="#dfe8ec" d="M40 835h8v38h-8zM424 835h8v38h-8z" />
        </g>
        {/* light poles */}
        <path stroke="#ddd" strokeWidth="3" d="M783 225v102M961 250v80M528 250l8 130M195 360l15 110M662 360v90" />
        <path fill="#dfe8ec" d="M936 480h7v20h-7zM944 582h7v30h-7zM934 666h8v34h-8zM922 786h8v36h-8z" />
        {/* pale trees at the back */}
        <path stroke="#d9d9cf" strokeWidth="6" fill="none" d="m222 340 16 70M290 330l12 54M388 330l4 48M440 330l4 34" />
        <path fill="#c4c8c8" opacity=".6" d="m212 265 60-15 12 96h-60zM282 254h84l-14 46H290zM374 262l70-12 4 84h-66z" />
        <g fill="#dde3e2">
            <path d={foliage(185, 298, 46, 62, 11)} />
            <path d={foliage(262, 322, 42, 34, 12, 36)} opacity=".8" />
            <path d={foliage(278, 240, 50, 26, 13, 36)} opacity=".8" />
            <path d={foliage(330, 316, 42, 40, 14, 30)} opacity=".6" />
            <path d={foliage(440, 292, 60, 58, 15)} />
        </g>
        {/* selected tree, rear */}
        <path fill="#86108f" d={foliage(445, 440, 115, 72, 21, 90)} />
        <path fill="#7d0f87" d={foliage(520, 530, 70, 66, 27)} opacity=".85" />
        <path fill="#5a0b60" d="m420 380 40 8 20 120-60 10z" opacity=".7" />
        <path stroke="#8a1292" strokeWidth="9" d="m462 520 10 138" />
        <Conifer x={70} y={446} fill="#2f7a3c" />
        <Conifer x={144} y={448} fill="#2f7a3c" />
        {/* pale tree, front */}
        <path fill="#8f9090" d="m240 680 150-150 60 50-190 130z" />
        <path fill="#4b4b4e" d="m220 570 90-50 16 140-60 44z" />
        <path fill="#b9bcb8" opacity=".85" d="m305 480 60 0 60 50-40 110-55 20z" />
        <g fill="#c9cfc6">
            <path d={foliage(260, 480, 66, 36, 41, 50)} />
            <path d={foliage(205, 550, 48, 56, 42, 50)} />
            <path d={foliage(240, 640, 44, 34, 45, 24)} />
            <path d={foliage(410, 545, 46, 50, 43, 34)} />
            <path d={foliage(415, 620, 66, 56, 44, 60)} />
        </g>
        <path fill="#fff" opacity=".18" d="m300 470 330-110-80 120-230 60z" />
        <path stroke="#d7d9cc" strokeWidth="9" d="m326 670 30 118M348 690l8 98" />
        <path stroke="#d7d7d7" strokeWidth="4" d="m118 542 26 128" />
        {/* white sign */}
        <path fill="#f1f1f1" d="M850 380h44v144h-30z" />
        <path stroke="#efefef" strokeWidth="5" d="m897 376 6 248" />
        {/* selected tree, front */}
        <path fill="#84118c" d={foliage(715, 545, 165, 150, 51, 150)} />
        <path fill="#8a1493" d={foliage(590, 545, 80, 60, 54)} />
        <path fill="#8a1493" d={foliage(825, 475, 66, 60, 55)} />
        <path fill="#84118c" d={foliage(715, 415, 64, 42, 58)} />
        <path fill="#84118c" d={foliage(630, 650, 74, 50, 56)} />
        <path fill="#981fa1" opacity=".6" d={foliage(760, 450, 100, 64, 52, 60)} />
        <path fill="#6c1474" opacity=".7" d="m680 530 24-8 6 190-30 20z" />
        <path fill="#b478b4" opacity=".3" d="m590 520 90-90 80 20-30 100z" />
        <Conifer x={625} y={474} fill="#74217c" />
        <Conifer x={661} y={438} fill="#74217c" />
        <Conifer x={735} y={470} fill="#7a2382" />
        <Conifer x={757} y={424} fill="#5d2d66" />
        <path fill="#1d6b37" d="M840 535c10-12 26-10 32 4-6 14-26 14-32 0zM718 486c6-10 16-8 18 4-4 8-14 8-18-4zM205 546l10-10 8 6 8-6 6 12-14 10z" />
        <path stroke="#c9a8c9" strokeWidth="3" d="M600 534h300M556 581h320" />
        <path stroke="#84118c" strokeWidth="10" d="m786 560 14 300M700 700l22 106" />
        <path stroke="#e8e8e8" strokeWidth="4" d="m708 720 18 218M708 706l24-26" />
        {/* navigation cube */}
        <path fill="#f0f0f0" fillRule="evenodd" d="M45 815a155 47 0 0 1 310 0a155 47 0 0 1-310 0zM83 812a117 33 0 0 0 234 0a117 33 0 0 0-234 0z" />
        <path fill="#e4e4e4" d="M140 670h120v155H140z" />
        <path fill="#c9ccd0" d="M162 680h76v26h-76zM162 732h76v72h-76z" />
        <path stroke="#8f8f8f" strokeWidth="4" d="M140 711h120" />
        <clipPath id="topFace"><path d="M140 684h120v9H140z" /></clipPath>
        <g className="font-['Liberation_Sans',sans-serif] text-[24px] font-bold" fill="#3c3c3c" textAnchor="middle">
            <text x="200" y="699" clipPath="url(#topFace)">TOP</text>
            <text x="200" y="777">FRONT</text>
        </g>
        {/* pointer */}
        <circle cx="1076" cy="543" r="58" fill="url(#glow)" />
        <path fill="#fbf7a0" stroke="#55581a" strokeWidth="2" d="m1076 545 0 30 8-6 6 12 6-4-6-12h10z" />
    </svg>
)

const CenterPanel = () => (
    <main className="flex min-w-0 flex-1 flex-col pl-1">
        <div className="flex h-[211px] shrink-0">
            <TaskTable />
            <GanttChart />
        </div>
        <div className="flex h-[20px] shrink-0 text-[#5f5f5f]">
            <button className="px-1">Поддержка</button>
            <button className="mb-[1px] border border-t-0 border-[#cfcfcf] bg-white px-1">Диаграмма Ганта</button>
        </div>
        <div className="h-[4px] shrink-0 bg-[#cacaca]" />
        <header className="flex h-[29px] shrink-0 items-center justify-between pl-[3px] pr-1">
            <h2 className="whitespace-pre text-[15px] leading-5 text-[#23599f]">{'3D Используемые даты [Наилучшие] Цвета [Визуальные профили]  [992x423]'}</h2>
            <PanelButtons />
        </header>
        <Scene />
    </main>
)

/* ---------- 3D window properties ---------- */

type Prop = { label: string; group?: boolean; value?: string; check?: boolean; off?: boolean; nested?: boolean }

const props: Prop[] = [
    { label: 'Общее', group: true },
    { label: 'Заголовок 3D ...', value: '3D' },
    { label: 'Показыват...', value: '992, 423', off: true, nested: true },
    { label: 'Режим отрисов...', value: 'Затенение Гуро' },
    { label: 'Сохранить пол...', check: true },
    { label: 'Поле зрения', value: '35.00' },
    { label: 'Даты и цвета', group: true },
    { label: 'Игнорировать ...', check: false },
    { label: 'Используемые...', value: 'Наилучшие' },
    { label: 'Целевой план', off: true },
    { label: 'Режим раскрас...', value: 'Визуальные профили' },
    { label: 'Использовать ...', off: true },
    { label: 'Активный код', off: true },
    { label: 'Категория стат...', off: true },
    { label: 'Видимость', group: true },
    { label: 'Линии', check: false },
    { label: 'Текст', check: true },
    { label: 'Ребра', check: false },
    { label: 'Грани', check: true },
    { label: 'Эффекты', group: true },
    { label: 'Затенение фо...', check: false },
    { label: 'Кромки силуэта', check: false },
    { label: 'Тени', check: false },
    { label: 'Использовать ...', check: false },
    { label: 'Индикаторы', group: true },
    { label: 'Осевой репер', check: true },
    { label: 'Сетки', check: false },
    { label: 'Легенда', check: false },
    { label: '3D пути', check: false },
    { label: 'Время отсч...', value: 'False, Сверху, 18.00, 000000, True, ...', off: true, nested: true },
    { label: 'Выделение', group: true },
    { label: 'Инструмент вы...', value: 'Выделение рамкой' },
    { label: 'Выделить толь...', check: false }
]

const PropRow = ({ p, i }: { p: Prop; i: number }) => {
    const id = `prop-${i}`
    if (p.group) {
        return (
            <tr className="bg-[#ececec]">
                <td className="h-[14px] w-[15px]"><svg viewBox="0 0 10 10" className="mx-auto h-[5px] w-[5px]"><path fill="#999" d="M9 1v8H1z" /></svg></td>
                <th colSpan={2} className="pl-[3px] text-left text-[10px] text-[#222]">{p.label}</th>
            </tr>
        )
    }
    return (
        <tr className={p.off ? 'text-[#a3a3a3]' : ''}>
            <td className="h-[14px] w-[15px] bg-[#ececec]" />
            <th className="overflow-hidden whitespace-nowrap border-b border-r border-[#ececec] pl-[3px] text-left font-normal">
                <label htmlFor={p.check !== undefined ? id : undefined} className="flex items-center">
                    {p.nested && <Tri dir="right" className="mr-[9px] h-[5px] w-[5px] text-[#b5b5b5]" />}
                    {p.label}
                </label>
            </th>
            <td className="overflow-hidden whitespace-nowrap border-b border-[#ececec] pl-[3px]">
                {p.check !== undefined ? (
                    <span className="relative -ml-px flex h-[11px] w-[11px] items-center justify-center">
                        <input id={id} type="checkbox" defaultChecked={p.check} className="peer h-[11px] w-[11px] appearance-none border border-[#9d9d9d] bg-white" />
                        <svg viewBox="0 0 10 10" className="pointer-events-none absolute h-[9px] w-[9px] opacity-0 peer-checked:opacity-100" fill="none" stroke="#333" strokeWidth="1.3"><path d="m2 5 2 2 4-4" /></svg>
                    </span>
                ) : p.value}
            </td>
        </tr>
    )
}

const sceneTabs: { name: string; art: ReactNode }[] = [
    { name: 'Легенда', art: <><path fill="#c43a3a" d="M0 0h4v4H0z" /><path fill="#76ad3b" d="M0 4h4v4H0z" /><path fill="#4f6ba8" d="M0 8h4v4H0z" /><path stroke={BLUE} strokeWidth="1.8" d="M6 2h7M6 6h7M6 10h7" /></> },
    { name: 'Фильтры', art: <><path fill="#3d4f86" d="m6 3 6 3v4l-6 3-6-3V6z" /><path fill="#b1539b" d="M1 0h11L9 4v4H5V4z" /><path stroke="#fff" strokeWidth=".8" d="M3 1h7" /></> },
    { name: 'Сечения', art: <><path fill="#9a6b3c" d="M6.500 0 13 6.500 6.500 13 0 6.500z" /><circle cx="6.5" cy="6.5" r="4.5" fill="#5e7a38" /><circle cx="6.5" cy="6.5" r="2.5" fill="#b5322f" /></> },
    { name: 'Карта', art: <><path fill="none" stroke={BLUE} d="M2 1h9l1 11H1zM1 5h11M1 8.500h11M5 1v11M8.500 1v11" /><path fill={RED} d="M9 0c5 0 4 5 0 9-4-4-5-9 0-9z" /><circle cx="9" cy="3.5" r="1.3" fill="#fff" /></> },
    { name: 'Среда', art: <><path fill="#4fa832" d="M1 3c2 0 3 2 4 4V1c4 1 4 4 3 6h5c0 4-4 6-7 6S1 9 1 3z" /><path fill="#8fdc4a" d="M5 1c4 1 4 4 3 6L6 9z" /></> }
]

const PropertiesPanel = () => (
    <aside className="ml-[5px] flex w-[283px] shrink-0 flex-col border-l border-[#c8c8c8]">
        <header className="flex h-[27px] shrink-0 items-center justify-between pl-[2px] pr-1">
            <h2 className="text-[15px] leading-5 text-[#444]">Свойства 3D окна</h2>
            <PanelButtons />
        </header>
        <div className="flex h-[19px] shrink-0 items-stretch">
            <button className="flex items-center gap-[2px] border border-b-0 border-[#c4c4c4] bg-[#f8f8f8] px-[3px] text-[#4a4a4a]">
                <svg viewBox="0 0 12 12" className="h-3 w-3" fill="none" stroke="#b0484f"><path d="M.5.500h11v11H.5z" /><path strokeDasharray="3 1" d="M2 3h8M2 6h8M2 9h8" /></svg>
                Общее
            </button>
            <div className="flex flex-1 items-center gap-[12px] pl-[6px]">
                {sceneTabs.map(t => (
                    <button key={t.name} aria-label={t.name}><svg viewBox="0 0 13 13" className="h-3 w-3">{t.art}</svg></button>
                ))}
                <button aria-label="Погода"><CloudSun className="h-3 w-3 text-[#9a8a6c]" /></button>
                <button aria-label="Сетка">
                    <svg viewBox="0 0 13 13" className="h-3 w-3" fill="none" stroke={BLUE}><path d="M3 1h7l2 11H1zM2.500 4.500h8M1.500 8.500h10M5 1 4.500 12M8 1l.5 11" /></svg>
                </button>
                <button aria-label="Камера">
                    <svg viewBox="0 0 13 13" className="h-3 w-3" fill="none" stroke={BLUE}><path d="M1 4h8v7H1zM9 6l3-2v7l-3-2M2 4c0-2 4-2 5 0" /><path stroke={RED} d="M3 9h4" /></svg>
                </button>
            </div>
            <div className="flex items-center gap-[7px] pr-[4px] text-[#777]">
                <Tri dir="left" />
                <Tri dir="right" />
            </div>
        </div>
        <div className="flex min-h-0 flex-1 border border-[#c4c4c4] bg-[#f8f8f8] px-[5px] pb-[6px] pt-1">
            <div className="min-w-0 flex-1 overflow-hidden border border-[#dcdcdc] bg-[#fcfcfc]">
                <table className="w-full table-fixed border-separate border-spacing-0 font-['Liberation_Sans',sans-serif] text-[9px] leading-[12px] text-[#3f3f3f]">
                    <colgroup>
                        <col className="w-[15px]" />
                        <col className="w-[79px]" />
                        <col />
                    </colgroup>
                    <tbody>
                        {props.map((p, i) => <PropRow key={i} p={p} i={i} />)}
                    </tbody>
                </table>
            </div>
            <VScroll before="h-0" thumb="h-[414px]" after="flex-1" />
        </div>
        <Tabs items={['Свойства работы', 'Свойства ресурса', 'Свойства 3D окна']} active="Свойства 3D окна" />
    </aside>
)

/* ---------- status bar ---------- */

const StatusBar = () => (
    <footer className="flex h-[21px] shrink-0 items-center whitespace-nowrap border-b border-black bg-[#f0f0f0] pl-[6px] text-[#555]">
        <span className="w-[414px]">Для вызова справки нажмите F1</span>
        <span className="w-[107px]">Достаточно памяти</span>
        <span className="w-[69px]">[Фильтр выкл.]</span>
        <span className="w-[92px]">Выделено [1][4][4]</span>
        <span className="w-[77px]">12.07.21</span>
        <span className="w-[151px]">Персональный проект</span>
        <span className="flex-1">Транзакций: 36</span>
        <span className="w-[79px]">Administrator</span>
        <span className="w-[33px]">100%</span>
        <button aria-label="Уменьшить"><Minus className="h-[9px] w-[9px]" /></button>
        <label className="mx-2 flex items-center">
            <span className="sr-only">Масштаб</span>
            <input
                type="range"
                defaultValue={20}
                className="h-3 w-[72px] appearance-none bg-[linear-gradient(#c4c4c4,#c4c4c4)] bg-[length:100%_1px] bg-center bg-no-repeat [&::-webkit-slider-thumb]:h-3 [&::-webkit-slider-thumb]:w-1 [&::-webkit-slider-thumb]:appearance-none [&::-webkit-slider-thumb]:border [&::-webkit-slider-thumb]:border-[#8f8f8f] [&::-webkit-slider-thumb]:bg-[#e8e8e8]"
            />
        </label>
        <button aria-label="Увеличить" className="mr-1"><Plus className="h-[9px] w-[9px]" /></button>
    </footer>
)

export default function App() {
    return (
        <div className="flex h-screen w-full flex-col overflow-hidden bg-[#e4e4e4] font-['Open_Sans','Noto_Sans',sans-serif] text-[9px] leading-[13px]">
            <div className="shrink-0 bg-[#2b5592]">
                <TitleBar />
                <MenuBar />
            </div>
            <Ribbon />
            <Toolbar />
            <div className="flex min-h-0 flex-1 pt-[3px]">
                <ResourcesPanel />
                <CenterPanel />
                <PropertiesPanel />
            </div>
            <StatusBar />
        </div>
    )
}
